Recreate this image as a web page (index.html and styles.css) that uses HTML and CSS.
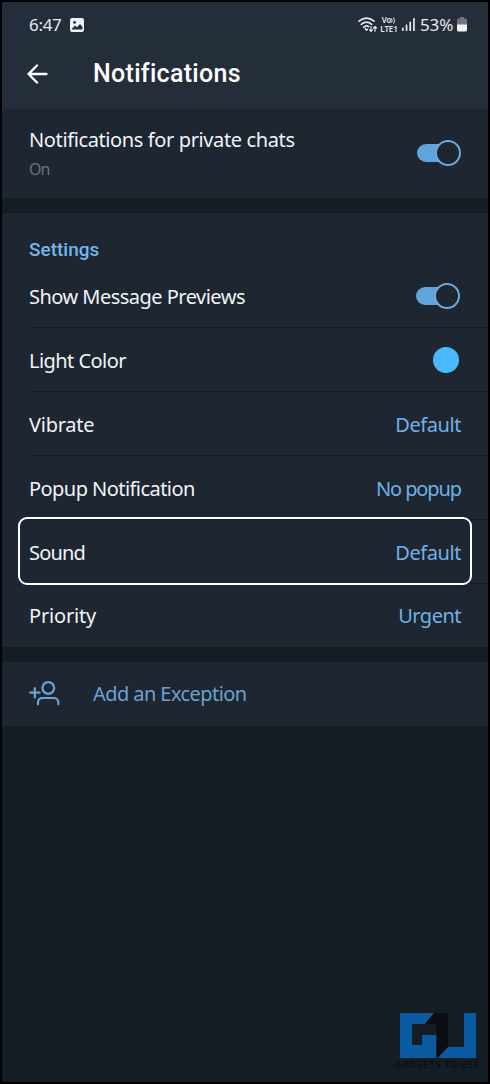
FILE: index.html
```html
<!DOCTYPE html>
<html lang="en">
<head>
<meta charset="utf-8">
<title>Notifications</title>
<link rel="stylesheet" href="styles.css">
</head>
<body>
<main class="screen">
  <header class="header">
    <div class="status">
      <span class="time">6:47</span>
      <svg class="picture-icon" width="14" height="14" viewBox="0 0 14 14"><rect width="14" height="14" rx="2.2" fill="#eef1f7"/><circle cx="4.6" cy="4.4" r="1.4" fill="#242d3a"/><path d="M1.8 10.8 5 7.5l2 1.8 3-3.2 2.4 2.700v2.700H1.800z" fill="#242d3a"/></svg>
      <div class="status-right">
        <svg class="wifi" width="20" height="16" viewBox="0 0 20 16" fill="none" stroke="#e6eaf0" stroke-width="1.7" stroke-linecap="round"><path d="M1 4.2Q8.500-1.900 16 4.200M3.300 7.300Q8.500 2.900 13.700 7.300M5.700 10.200Q8.500 7.900 10.700 9.600"/><path d="M7.300 11.600 8.500 13.200 9.500 12.200" stroke-width="1.500"/><path d="M13 9.500v4.700M11.500 12.800 13 14.300l1.500-1.500M17 14.300V9.600M15.500 11 17 9.500l1.500 1.500" stroke-width="1.200"/></svg>
        <span class="volte"><span class="vo">Vo<svg width="5" height="7" viewBox="0 0 5 7" fill="none" stroke="#e6eaf0" stroke-width="1"><path d="M.5 1.500q1.400 2 0 4M2.500.5q2.400 3 0 6"/></svg></span><span>LTE1</span></span>
        <svg class="signal" width="13" height="13" viewBox="0 0 13 13" fill="#e6eaf0"><rect x="0" y="9.500" width="1.600" height="3.500" rx=".6"/><rect x="3.700" y="6.500" width="1.700" height="6.500" rx=".6"/><rect x="7.400" y="3.500" width="1.700" height="9.500" rx=".6"/><rect x="11.100" y="0" width="1.700" height="13" rx=".6"/></svg>
        <span class="percent">53%</span>
        <svg class="battery" width="10" height="15" viewBox="0 0 10 15"><path d="M3 0h4v1.500h1.500Q10 1.500 10 3v5H0V3q0-1.500 1.500-1.500H3z" fill="#73777d"/><path d="M0 7.500h10V13q0 1.500-1.500 1.500h-7Q0 14.500 0 13z" fill="#f2f3f5"/></svg>
      </div>
    </div>
    <div class="titlebar">
      <svg width="21" height="20" viewBox="0 0 21 20" fill="none" stroke="#fff" stroke-width="2.300" stroke-linecap="round" stroke-linejoin="round"><path d="M19.500 10H1.500M10 1.500 1.500 10l8.500 8.500"/></svg>
      <h1>Notifications</h1>
    </div>
  </header>

  <section class="panel private">
    <div>
      <div class="label t-private">Notifications for private chats</div>
      <div class="sub">On</div>
    </div>
    <span class="switch"></span>
  </section>

  <section class="panel settings">
    <h2>Settings</h2>
    <div class="row first"><span class="label t-show">Show Message Previews</span><span class="switch"></span></div>
    <div class="row"><span class="label t-light">Light Color</span><span class="dot"></span></div>
    <div class="row"><span class="label t-vibrate">Vibrate</span><span class="value t-default">Default</span></div>
    <div class="row"><span class="label t-popup">Popup Notification</span><span class="value t-nopopup">No popup</span></div>
    <div class="row marked"><span class="label t-sound">Sound</span><span class="value t-default">Default</span></div>
    <div class="row"><span class="label t-priority">Priority</span><span class="value t-urgent">Urgent</span></div>
  </section>

  <section class="panel exception">
    <svg width="31" height="25" viewBox="0 0 31 25" fill="none" stroke="#6ba3d3" stroke-width="2.200" stroke-linecap="round"><circle cx="19.300" cy="7" r="5.800"/><path d="M1.200 11.700h9.300M5.800 7v9.400M9 23.300v-1.800q0-4.500 5-4.500h10.300q5 0 5 4.500v1.800"/></svg>
    <span class="value t-add">Add an Exception</span>
  </section>

  <footer class="brand">
    <svg width="76" height="45" viewBox="0 0 76 45"><path d="M0 0h34L25 11H12v21h10V22H36V45H0z" fill="#0b5aa2"/><path d="M34 0H48V34L37 45V18H36V11H25z" fill="#0a0e13"/><path d="M64 0H76V45H38L48 34H64z" fill="#0b5aa2"/></svg>
    <span>GADGETS TO USE</span>
  </footer>
</main>
</body>
</html>
```
FILE: styles.css
```css
*, *::before, *::after { box-sizing: border-box; }
body { margin: 0; background: #000; }
.screen {
  width: 490px; height: 1084px;
  border: 2px solid #000;
  background: #141d24;
  font-family: "Noto Sans", sans-serif;
  display: flex; flex-direction: column;
}
.header { height: 107px; background: #242d3a; }
.status { display: flex; align-items: center; height: 45px; padding: 0 21px 0 27px; color: #e6eaf0; }
.time { font-size: 17px; letter-spacing: -.3px; width: 41px; white-space: nowrap; }
.status-right { display: flex; align-items: center; margin-left: auto; }
.wifi { margin-right: 2px; }
.volte { width: 18px; margin-right: 4px; display: flex; flex-direction: column; align-items: center; gap: 1px; font: 600 8px/8px "Noto Sans", sans-serif; letter-spacing: -.1px; white-space: nowrap; }
.vo { display: flex; align-items: center; }
.signal { margin-right: 5px; }
.percent { font-size: 17px; letter-spacing: -.1px; width: 37px; white-space: nowrap; }
.titlebar { display: flex; align-items: center; height: 53px; padding-left: 25px; }
h1 { margin: 0 0 0 45px; color: #fff; font: 500 25px/30px Roboto, sans-serif; letter-spacing: .3px; white-space: nowrap; }
.panel { background: #1d2631; }
.private { height: 89px; display: flex; justify-content: space-between; align-items: flex-start; padding: 17px 27px 0 27px; }
.private .switch { margin-top: 14px; }
.label, .value { font-size: 20px; line-height: 28px; white-space: nowrap; color: #f1f4f7; }
.value { color: #6fb1e6; }
.t-private { letter-spacing: -.38px; }
.t-show { letter-spacing: -.52px; }
.t-light { letter-spacing: -.55px; }
.t-vibrate { letter-spacing: -.25px; }
.t-popup { letter-spacing: -.55px; }
.t-sound { letter-spacing: -.85px; }
.t-priority { letter-spacing: -.17px; }
.t-default { letter-spacing: -.43px; }
.t-nopopup { letter-spacing: -1.1px; }
.t-urgent { letter-spacing: -.5px; }
.t-add { letter-spacing: -.57px; }
.sub { font-size: 16px; line-height: 22px; margin-top: 4px; letter-spacing: -.9px; color: #68737f; }
.switch { width: 45px; height: 26px; display: flex; align-items: center; position: relative; }
.switch::before { content: ""; width: 32px; height: 18px; border-radius: 9px; background: #61a4dc; margin-left: 1px; }
.switch::after { content: ""; position: absolute; right: 0; top: 0; width: 26px; height: 26px; border-radius: 50%; border: 2px solid #73a9d8; background: #1d2631; }
.settings { margin-top: 15px; height: 434px; }
h2 { margin: 0; height: 51px; padding: 24px 0 0 27px; color: #73b7ea; font: 500 19px/25px Roboto, sans-serif; }
.row { height: 64px; margin-left: 27px; padding: 1px 27px 0 0; border-bottom: 1px solid #141c25; display: flex; justify-content: space-between; align-items: center; position: relative; }
.row .label, .row .value { padding-top: 1px; }
.row:last-child { border-bottom: 0; padding-top: 0; }
.row:last-child .label, .row:last-child .value { padding-top: 0; }
.first .switch { margin: 0 1px 0 0; }
.dot { width: 26px; height: 26px; border-radius: 50%; background: #49b9ff; margin-right: 2px; }
.marked::after { content: ""; position: absolute; left: -11px; top: -3px; width: 454px; height: 68px; border: 2px solid #fff; border-radius: 9px; }
.exception { margin-top: 15px; height: 64px; display: flex; align-items: center; padding-left: 27px; }
.exception .value { margin-left: 33px; color: #6ba3d3; }
.exception svg { margin-top: -2px; }
.brand { margin: auto 8px 9px auto; width: 84px; display: flex; flex-direction: column; align-items: center; color: #05090d; font: 8px/15px "DejaVu Sans", sans-serif; letter-spacing: .9px; white-space: nowrap; }
```
